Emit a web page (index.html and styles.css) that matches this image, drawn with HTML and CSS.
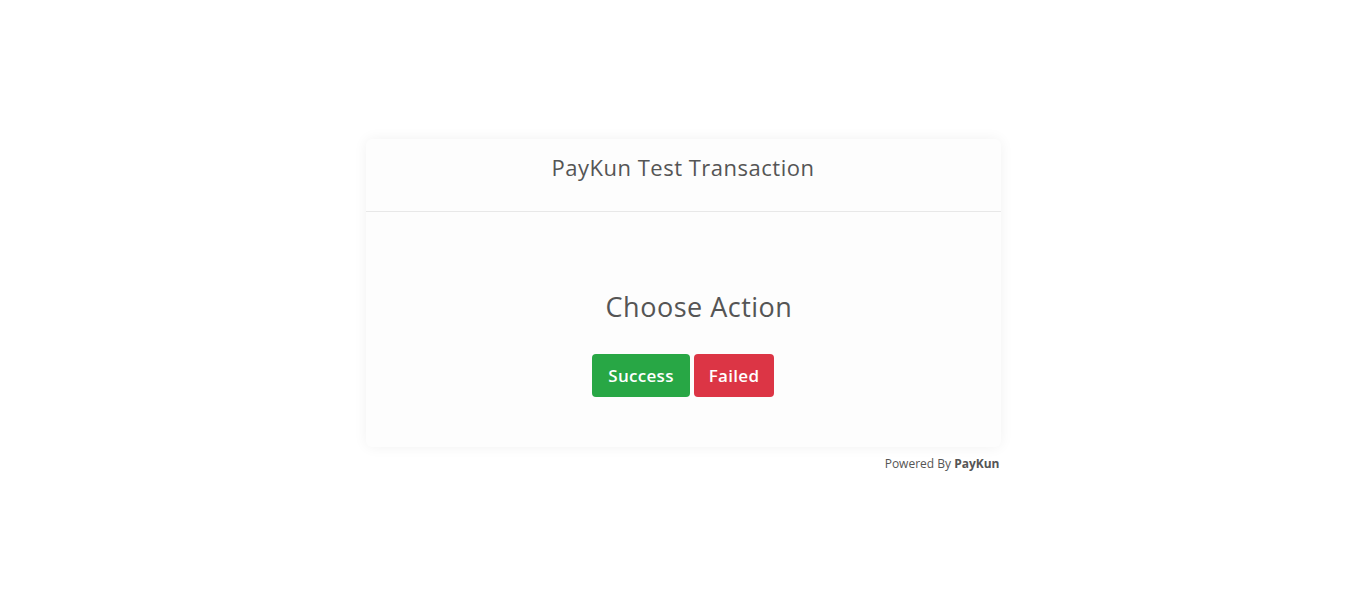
FILE: index.html
```html
<!DOCTYPE html>
<html lang="en">
<head>
<meta charset="utf-8">
<title>PayKun Test Transaction</title>
<link rel="stylesheet" href="styles.css">
</head>
<body>
<main class="wrap">
  <section class="card">
    <header class="card-head">
      <h1 class="title">PayKun Test Transaction</h1>
    </header>
    <div class="card-body">
      <h2 class="action">Choose Action</h2>
      <div class="buttons">
        <button class="btn btn-success">Success</button>
        <button class="btn btn-danger">Failed</button>
      </div>
    </div>
  </section>
  <p class="powered">Powered By <strong>PayKun</strong></p>
</main>
</body>
</html>
```

FILE: styles.css
```css
* { box-sizing: border-box; }
html, body { margin: 0; padding: 0; background: #ffffff; }
body {
  font-family: "Open Sans", "Noto Sans", sans-serif;
  color: #555555;
}
.wrap {
  width: 635px;
  margin: 0 auto;
  padding-top: 139px;
}
.card {
  background: #fdfdfd;
  border-radius: 6px;
  box-shadow: 0 0 14px rgba(0, 0, 0, 0.06);
}
.card-head {
  height: 73px;
  border-bottom: 1px solid #e8e8e8;
  padding-top: 13px;
  text-align: center;
}
.title {
  margin: 0;
  font-size: 22px;
  font-weight: 400;
  line-height: 30px;
  color: #555555;
  letter-spacing: 0.5px;
}
.card-body {
  height: 235px;
  padding-top: 74px;
  text-align: center;
}
.action {
  margin: 0 0 0 32px;
  font-size: 27px;
  font-weight: 400;
  line-height: 42px;
  color: #555555;
  letter-spacing: 0.5px;
}
.buttons {
  display: flex;
  justify-content: center;
  gap: 4px;
  margin-top: 26px;
}
.btn {
  height: 43px;
  border: none;
  border-radius: 4px;
  color: #ffffff;
  font-family: "Open Sans", "Noto Sans", sans-serif;
  font-size: 17px;
  font-weight: 600;
  letter-spacing: 0.3px;
  padding: 0;
  cursor: pointer;
}
.btn-success { background: #28a745; width: 98px; }
.btn-danger { background: #dc3545; width: 80px; }
.powered {
  margin: 8px 1px 0 0;
  text-align: right;
  font-size: 12px;
  color: #555555;
}
.powered strong { font-weight: 700; }
```
